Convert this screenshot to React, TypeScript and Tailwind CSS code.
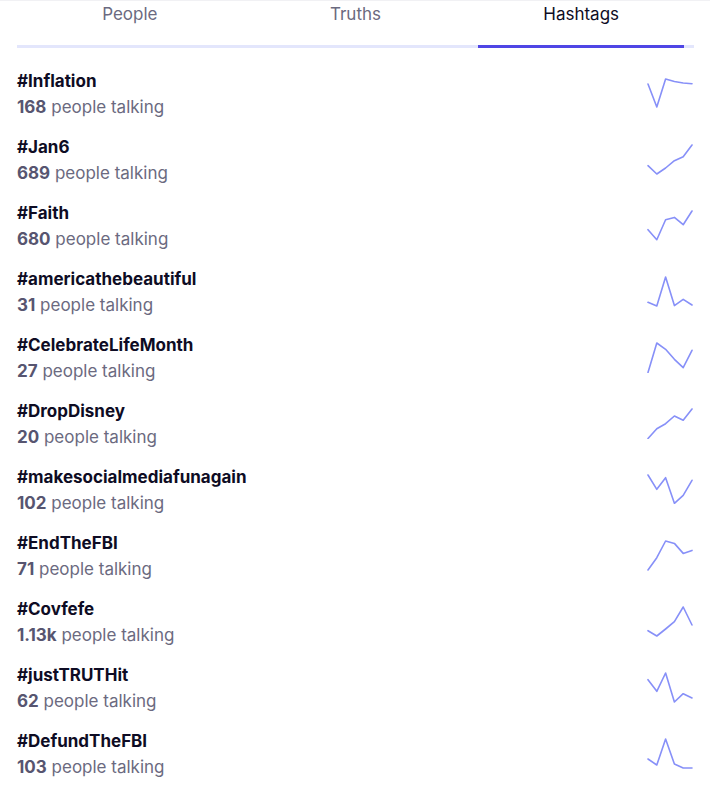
import { useState } from "react";

interface Hashtag {
  tag: string;
  count: string;
  trend: number[];
}

const hashtags: Hashtag[] = [
  { tag: "#Inflation", count: "168", trend: [5, 28, 0, 2.5, 4, 4.7] },
  { tag: "#Jan6", count: "689", trend: [20.7, 29, 23, 15.7, 11.7, 0] },
  { tag: "#Faith", count: "680", trend: [18.7, 28.7, 8.7, 6.4, 13.7, 0] },
  { tag: "#americathebeautiful", count: "31", trend: [25.3, 29, 0, 28.6, 22.3, 28] },
  { tag: "#CelebrateLifeMonth", count: "27", trend: [29.5, 0, 6.3, 16.3, 24.7, 7.3] },
  { tag: "#DropDisney", count: "20", trend: [29.5, 19.7, 14.7, 7, 11.3, 0] },
  { tag: "#makesocialmediafunagain", count: "102", trend: [0, 14.3, 2.7, 28.3, 20.3, 5.3] },
  { tag: "#EndTheFBI", count: "71", trend: [29, 16.7, 0, 2.4, 12.4, 9.4] },
  { tag: "#Covfefe", count: "1.13k", trend: [23.7, 29, 22, 14.7, 0, 18] },
  { tag: "#justTRUTHit", count: "62", trend: [6.7, 18.3, 0, 29, 20.7, 25] },
  { tag: "#DefundTheFBI", count: "103", trend: [20, 26, 0, 25, 29, 29] },
];

const tabs = ["People", "Truths", "Hashtags"];

const Sparkline = ({ values }: { values: number[] }) => {
  const points = values
    .map((v, i) => `${(1 + i * 8.8).toFixed(1)},${(1 + v).toFixed(1)}`)
    .join(" ");

  return (
    <svg width="46" height="31" viewBox="0 0 46 31" className="mt-[10px] shrink-0">
      <polyline
        points={points}
        fill="none"
        stroke="#8790f8"
        strokeWidth={1.6}
        strokeLinejoin="round"
        strokeLinecap="round"
      />
    </svg>
  );
};

export default function App() {
  const [active, setActive] = useState(2);

  return (
    <div
      className="min-h-screen border-t border-[#f1f1f4] bg-white pl-[17px] pr-[16px]"
      style={{ fontFamily: "Inter, 'Noto Sans', sans-serif" }}
    >
      <div className="grid grid-cols-3">
        {tabs.map((tab, i) => (
          <button
            key={tab}
            onClick={() => setActive(i)}
            className="flex flex-col items-stretch"
          >
            <span
              className={`pt-[1px] pb-[19px] text-center text-[17px] leading-6 ${
                active === i ? "text-[#0e0c24]" : "text-[#6b6a80]"
              }`}
            >
              {tab}
            </span>
            <div className="h-[3px] bg-[#e3e6fc] px-[10px]">
              {active === i && <div className="h-full bg-[#4f46e5]" />}
            </div>
          </button>
        ))}
      </div>

      <ul className="mt-[13px]">
        {hashtags.map((h) => (
          <li key={h.tag} className="flex items-start justify-between py-[7px] pr-[1px]">
            <div className="flex flex-col">
              <span className="text-[17px] font-bold leading-[26px] text-[#0e0c24]">
                {h.tag}
              </span>
              <span className="text-[17px] leading-[26px] text-[#6b6a80]">
                <span className="font-bold text-[#575570]">{h.count}</span> people
                talking
              </span>
            </div>
            <Sparkline values={h.trend} />
          </li>
        ))}
      </ul>
    </div>
  );
}
